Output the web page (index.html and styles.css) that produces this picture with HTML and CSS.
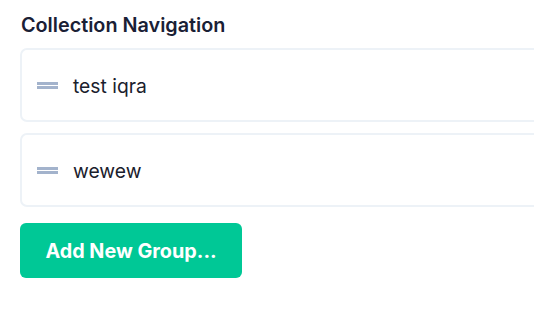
FILE: index.html
```html
<!DOCTYPE html>
<html lang="en">
<head>
  <meta charset="UTF-8" />
  <title>Collection Navigation</title>
  <link rel="stylesheet" href="styles.css">
</head>
<body>
  <div class="panel">
    <h2>Collection Navigation</h2>
    <div class="groups">
      <div class="group">
        <span class="handle"></span>
        <span class="name">test iqra</span>
      </div>
      <div class="group">
        <span class="handle"></span>
        <span class="name">wewew</span>
      </div>
    </div>
    <button class="add-btn">Add New Group...</button>
  </div>
</body>
</html>
```

FILE: styles.css
```css
* { box-sizing: border-box; }
html, body { margin: 0; background: #fff; overflow: hidden; }
body {
  font-family: Inter, 'Noto Sans', sans-serif;
  color: #1a202c;
}
.panel {
  padding: 12px 0 0 20px;
  width: 560px;
}
.panel h2 {
  margin: 0 0 10px 1px;
  font-size: 19.8px;
  font-weight: 600;
  line-height: 26px;
  color: #1a2035;
}
.groups {
  display: flex;
  flex-direction: column;
  gap: 11px;
}
.group {
  display: flex;
  align-items: center;
  height: 74px;
  padding-left: 15px;
  border: 2px solid #edf2f7;
  border-radius: 7px;
}
.handle {
  width: 21px;
  height: 7px;
  margin-top: 1px;
  border-top: 3px solid #a3b3cc;
  border-bottom: 3px solid #a3b3cc;
  margin-right: 15px;
}
.name {
  padding-top: 2px;
  font-size: 19.3px;
  color: #1a202c;
}
.add-btn {
  margin-top: 16px;
  padding-top: 2px;
  width: 222px;
  height: 55px;
  background: #00c896;
  color: #fff;
  border: none;
  border-radius: 6px;
  font-family: inherit;
  font-size: 19.8px;
  font-weight: 700;
  cursor: pointer;
}
```
